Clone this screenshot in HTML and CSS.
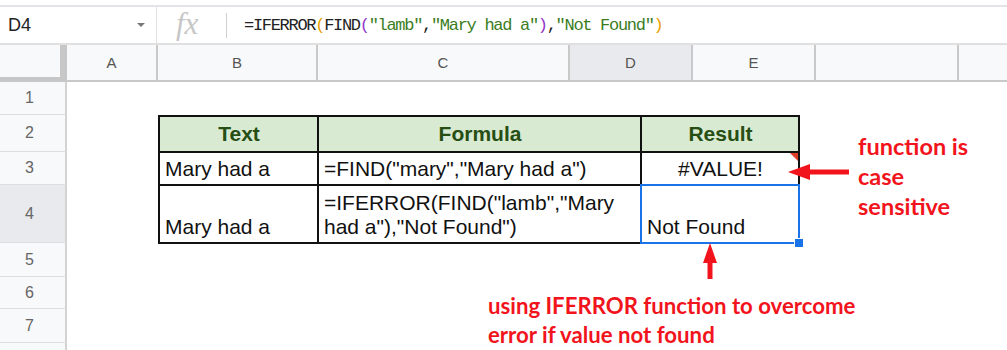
FILE: index.html
```html
<!DOCTYPE html>
<html>
<head>
<meta charset="utf-8">
<link rel="stylesheet" href="styles.css">
</head>
<body>
<div class="app">
  <div class="fbar">
    <div class="namebox"><span class="ref">D4</span><span class="caret"></span></div>
    <div class="fx">fx</div>
    <div class="fsep"></div>
    <div class="formula"><span class="k">=IFERROR</span><span class="p1">(</span><span class="k">FIND</span><span class="p2">(</span><span class="s">"lamb"</span><span class="k">,</span><span class="s">"Mary had a"</span><span class="p2">)</span><span class="k">,</span><span class="s">"Not Found"</span><span class="p1">)</span></div>
  </div>
  <div class="sheet">
    <div class="corner"></div>
    <div class="ch">A</div>
    <div class="ch">B</div>
    <div class="ch">C</div>
    <div class="ch ch-sel">D</div>
    <div class="ch">E</div>
    <div class="ch"></div>
    <div class="ch ch-last"></div>

    <div class="rh r1">1</div>
    <div class="rh r2">2</div>
    <div class="rh r3">3</div>
    <div class="rh r4 rh-sel">4</div>
    <div class="rh r5">5</div>
    <div class="rh r6">6</div>
    <div class="rh r7">7</div>
    <div class="rh r8"></div>

    <div class="tbl">
      <div class="c hd">Text</div>
      <div class="c hd">Formula</div>
      <div class="c hd">Result</div>
      <div class="c">Mary had a</div>
      <div class="c">=FIND("mary","Mary had a")</div>
      <div class="c ctr err">#VALUE!</div>
      <div class="c bot">Mary had a</div>
      <div class="c bot wrap">=IFERROR(FIND("lamb","Mary had a"),"Not Found")</div>
      <div class="c bot sel">Not Found<span class="handle"></span></div>
    </div>

    <div class="note note-right">function is<br>case<br>sensitive</div>
    <div class="note note-bottom">using IFERROR function to overcome<br>error if value not found</div>

    <svg class="arrow arrow-left" width="64" height="20" viewBox="0 0 64 20">
      <polygon points="0,10 22,2 22,7.5 61,7.5 61,12.5 22,12.5 22,18" fill="#f2141c"/>
    </svg>
    <svg class="arrow arrow-up" width="20" height="40" viewBox="0 0 20 40">
      <polygon points="10,0 17,20 12.5,20 12.5,36 7.5,36 7.5,20 3,20" fill="#f2141c"/>
    </svg>
  </div>
</div>
</body>
</html>
```

FILE: styles.css
```css
html, body {
  margin: 0;
  padding: 0;
  background: #fff;
}
body {
  font-family: "Liberation Sans", Arial, sans-serif;
  width: 1007px;
  height: 350px;
  overflow: hidden;
}
.app {
  display: flex;
  flex-direction: column;
}
.fbar {
  margin-top: 5px;
  height: 36px;
  border-top: 2px solid #e4e4e8;
  border-bottom: 2px solid #e0e0e0;
  display: flex;
  align-items: center;
}
.namebox {
  height: 100%;
  border-right: 1px solid #e0e0e0;
  display: flex;
  align-items: center;
  justify-content: space-between;
  padding: 0 11px 0 8px;
  box-sizing: border-box;
  width: 157px;
}
.ref {
  font-size: 18px;
  color: #222;
}
.caret {
  width: 0;
  height: 0;
  border-left: 4px solid transparent;
  border-right: 4px solid transparent;
  border-top: 4px solid #777;
}
.fx {
  width: 69px;
  padding-left: 19px;
  box-sizing: border-box;
  font-family: "Liberation Serif", serif;
  font-style: italic;
  font-size: 31px;
  color: #c6c6c6;
  line-height: 36px;
  margin-top: -3px;
}
.fsep {
  width: 1px;
  height: 25px;
  background: #cfcfcf;
}
.formula {
  padding-left: 17px;
  font-family: "Liberation Mono", monospace;
  font-size: 17px;
  letter-spacing: -1.3px;
  color: #222;
  white-space: pre;
}
.formula .p1 { color: #e8a100; }
.formula .p2 { color: #9334c7; }
.formula .s { color: #3b7d1e; }

.sheet {
  position: relative;
  display: grid;
  grid-template-columns: 67px 91px 160px 252px 123px 123px 143px 1fr;
  grid-template-rows: 37px 33px 37px 33px 58px 34px 32px 34px 1fr;
  height: 305px;
}
.corner {
  grid-column: 1;
  grid-row: 1;
  background: #f8f9fa;
  border-right: 7px solid #c7c7c7;
  border-bottom: 5px solid #c7c7c7;
}
.ch {
  grid-row: 1;
  background: #f8f9fa;
  border-right: 2px solid #c9c9c9;
  border-bottom: 2px solid #c9c9c9;
  display: flex;
  align-items: center;
  justify-content: center;
  font-size: 15px;
  color: #555;
  box-sizing: border-box;
}
.ch-sel { background: #e8eaed; }
.ch-last { border-right: none; }
.rh {
  grid-column: 1;
  background: #f8f9fa;
  border-right: 2px solid #d3d3d3;
  border-bottom: 1px solid #dedede;
  display: flex;
  align-items: center;
  justify-content: center;
  padding-right: 6px;
  font-size: 16px;
  color: #666;
  box-sizing: border-box;
}
.rh-sel { background: #e8eaed; }
.r1 { grid-row: 2; }
.r2 { grid-row: 3; }
.r3 { grid-row: 4; }
.r4 { grid-row: 5; }
.r5 { grid-row: 6; }
.r6 { grid-row: 7; }
.r7 { grid-row: 8; }
.r8 { grid-row: 9; border-bottom: none; }

.tbl {
  grid-column: 3 / 8;
  grid-row: 3 / 7;
  align-self: start;
  justify-self: start;
  display: grid;
  grid-template-columns: 157px 321px 156px;
  grid-template-rows: 34px 31px 56px;
  gap: 2px;
  padding: 2px;
  background: #111;
  font-size: 21px;
  color: #111;
}
.c {
  background: #fff;
  padding: 0 4px 0 5px;
  display: flex;
  align-items: center;
  white-space: nowrap;
  position: relative;
  line-height: 24px;
}
.c.hd {
  background: #d9ead3;
  color: #274e13;
  font-weight: bold;
  justify-content: center;
}
.c.ctr { justify-content: center; }
.c.bot { align-items: flex-end; padding-bottom: 3px; }
.c.wrap { white-space: normal; padding-right: 30px; }
.c.err::after {
  content: "";
  position: absolute;
  top: 0;
  right: 0;
  border-top: 8px solid #e03c2a;
  border-left: 8px solid transparent;
}
.c.sel::before {
  content: "";
  position: absolute;
  top: -2px;
  left: -2px;
  right: -2px;
  bottom: -2px;
  border: 2px solid #1a73e8;
}
.handle {
  position: absolute;
  right: -6px;
  bottom: -6px;
  width: 10px;
  height: 10px;
  background: #1a73e8;
  box-sizing: border-box;
  border: 1px solid #fff;
}

.note {
  position: absolute;
  font-family: Lato, "Open Sans", sans-serif;
  font-weight: bold;
  font-size: 22px;
  line-height: 30px;
  color: #f2141c;
  white-space: nowrap;
}
.note-right { left: 858px; top: 86px; font-size: 23.5px; }
.note-bottom { left: 488px; top: 246px; line-height: 29px; font-size: 22.2px; }
.arrow { position: absolute; }
.arrow-left { left: 788px; top: 117px; }
.arrow-up { left: 700px; top: 198px; }
```
